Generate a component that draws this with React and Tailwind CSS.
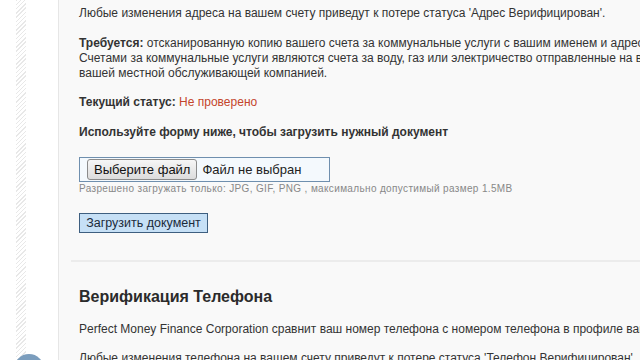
import React from 'react';

const font = { fontFamily: '"Liberation Sans", Arial, sans-serif' };

export default function App() {
  return (
    <div className="w-[640px] h-[360px] overflow-hidden bg-white flex text-[#333]" style={font}>
      {/* Left rail */}
      <div className="relative w-[58px] shrink-0 flex">
        <div className="w-[16px]" />
        <div className="w-[10px] bg-[repeating-linear-gradient(135deg,#e8e8e8_0px,#e8e8e8_1px,#ffffff_1px,#ffffff_3px)]" />
        <div className="absolute left-[14px] top-[354px] w-[30px] h-[30px] rounded-full bg-[#7b9dbd]" />
      </div>

      {/* Content panel */}
      <div className="flex-1 min-w-0 bg-[#f9f9f9] border-l border-[#e6e6e6]">
        <div className="w-[700px] pl-[20px] pt-[6px] text-[12px] leading-[15px]">
          <p>Любые изменения адреса на вашем счету приведут к потере статуса 'Адрес Верифицирован'.</p>

          <p className="mt-[15px]">
            <b className="font-bold">Требуется:</b> отсканированную копию вашего счета за коммунальные услуги с вашим именем и адресом.
            <br />
            Счетами за коммунальные услуги являются счета за воду, газ или электричество отправленные на ваш адрес
            <br />
            вашей местной обслуживающей компанией.
          </p>

          <p className="mt-[14px]">
            <b className="font-bold">Текущий статус:</b> <span className="text-[#c4452c]">Не проверено</span>
          </p>

          <p className="mt-[15px] font-bold">Используйте форму ниже, чтобы загрузить нужный документ</p>

          <div className="mt-[17px] w-[251px] h-[25px] border border-[#6f8fae] bg-[#f4f9fd] flex items-center pl-[7px] gap-[5px]">
            <div className="h-[21px] px-[6px] flex items-center border border-[#8b8b8b] rounded-[3px] bg-[linear-gradient(#f6f6f6,#dcdcdc)] text-[13px] text-[#111]">
              Выберите файл
            </div>
            <span className="text-[13px] text-[#222]">Файл не выбран</span>
          </div>

          <p className="mt-[1px] text-[10px] leading-[12px] text-[#888] tracking-[0.35px]">
            Разрешено загружать только: JPG, GIF, PNG , максимально допустимый размер 1.5MB
          </p>

          <div className="mt-[18px] w-[129px] h-[20px] border border-[#3e5f80] bg-[#c6e0f6] flex items-center justify-center text-[12.5px] text-[#1a2a3a]">
            Загрузить документ
          </div>
        </div>

        <div className="mt-[27px] ml-[12px] h-[2px] bg-[#ececec]" />

        <div className="w-[700px] pl-[20px] text-[12px] leading-[15px]">
          <h2 className="mt-[25px] text-[16px] leading-[20px] font-bold text-[#2b2b2b]">Верификация Телефона</h2>
          <p className="mt-[15px]">
            Perfect Money Finance Corporation сравнит ваш номер телефона с номером телефона в профиле вашего счета.
          </p>
          <p className="mt-[14px]">
            Любые изменения телефона на вашем счету приведут к потере статуса 'Телефон Верифицирован'.
          </p>
        </div>
      </div>
    </div>
  );
}
